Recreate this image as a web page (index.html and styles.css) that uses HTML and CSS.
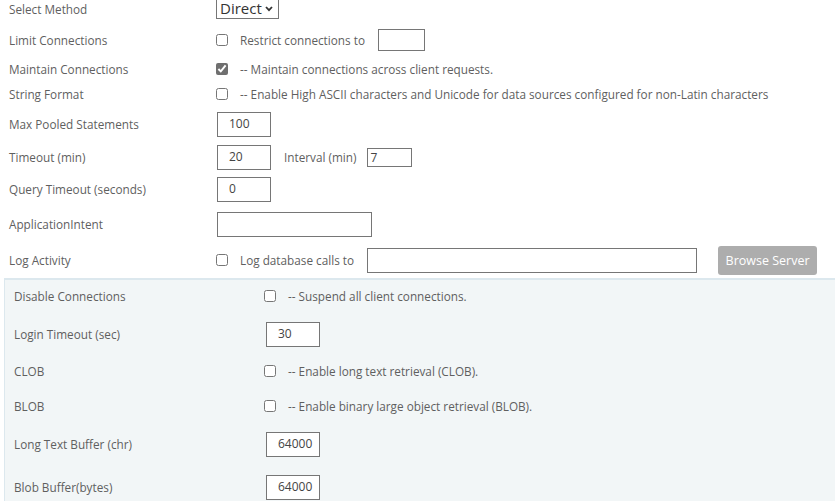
FILE: index.html
```html
<!DOCTYPE html>
<html>
<head>
<meta charset="utf-8">
<link rel="stylesheet" href="styles.css">
</head>
<body>
<div class="form">
  <div class="main">
    <div class="label first">Select Method</div>
    <div class="field field-sel">
      <span class="sel-wrap">
        <select class="method"><option>Direct</option></select>
        <svg class="chev" width="8" height="6" viewBox="0 0 8 6"><path d="M1 1 L4 4.2 L7 1" fill="none" stroke="#333" stroke-width="1.8"/></svg>
      </span>
    </div>

    <div class="label">Limit Connections</div>
    <div class="field"><input type="checkbox" class="cb"><span class="desc restrict">Restrict connections to</span><input class="txt w-restrict" type="text"></div>

    <div class="label">Maintain Connections</div>
    <div class="field"><input type="checkbox" class="cb" checked><span class="desc">-- Maintain connections across client requests.</span></div>

    <div class="label">String Format</div>
    <div class="field"><input type="checkbox" class="cb"><span class="desc">-- Enable High ASCII characters and Unicode for data sources configured for non-Latin characters</span></div>

    <div class="label">Max Pooled Statements</div>
    <div class="field"><input class="txt num" type="text" value="100"></div>

    <div class="label">Timeout (min)</div>
    <div class="field"><input class="txt num" type="text" value="20"><span class="desc interval">Interval (min)</span><input class="txt small" type="text" value="7"></div>

    <div class="label">Query Timeout (seconds)</div>
    <div class="field"><input class="txt num" type="text" value="0"></div>

    <div class="label">ApplicationIntent</div>
    <div class="field"><input class="txt wide" type="text"></div>

    <div class="label">Log Activity</div>
    <div class="field"><input type="checkbox" class="cb"><span class="desc logcalls">Log database calls to</span><input class="txt log" type="text"><button class="browse">Browse Server</button></div>
  </div>

  <div class="panel">
    <div class="label">Disable Connections</div>
    <div class="field"><input type="checkbox" class="cb"><span class="desc">-- Suspend all client connections.</span></div>

    <div class="label">Login Timeout (sec)</div>
    <div class="field"><input class="txt num" type="text" value="30"></div>

    <div class="label">CLOB</div>
    <div class="field"><input type="checkbox" class="cb"><span class="desc">-- Enable long text retrieval (CLOB).</span></div>

    <div class="label">BLOB</div>
    <div class="field"><input type="checkbox" class="cb"><span class="desc">-- Enable binary large object retrieval (BLOB).</span></div>

    <div class="label">Long Text Buffer (chr)</div>
    <div class="field"><input class="txt num" type="text" value="64000"></div>

    <div class="label">Blob Buffer(bytes)</div>
    <div class="field"><input class="txt num" type="text" value="64000"></div>
  </div>
</div>
</body>
</html>
```

FILE: styles.css
```css
html, body {
  margin: 0;
  padding: 0;
  background: #ffffff;
  overflow: hidden;
}
body {
  font-family: "Open Sans", "Segoe UI", Arial, sans-serif;
  font-size: 11.75px;
  color: #5f5f5f;
}
.main {
  display: grid;
  grid-template-columns: 207px 1fr;
  grid-template-rows: 28px 29px 25px 30px 33px 32px 35px 36px 30px;
  padding-left: 9px;
  align-items: start;
}
.label {
  height: 24px;
  display: flex;
  align-items: center;
  white-space: nowrap;
}
.label.first {
  height: 18px;
}
.field {
  height: 24px;
  display: flex;
  align-items: center;
  white-space: nowrap;
}
.field-sel {
  height: 18px;
  align-items: flex-start;
}
.sel-wrap {
  position: relative;
  display: inline-block;
  margin-top: -2px;
}
.method {
  -webkit-appearance: none;
  appearance: none;
  display: block;
  font-family: "Open Sans", "Segoe UI", Arial, sans-serif;
  font-size: 15px;
  color: #333;
  height: 21px;
  width: 63px;
  padding: 0 0 0 3px;
  margin: 0;
  border: 1px solid #767676;
  border-radius: 0;
  background: #fff;
  line-height: 19px;
}
.chev {
  position: absolute;
  left: 49px;
  top: 8px;
  pointer-events: none;
}
.cb {
  width: 12px;
  height: 12px;
  margin: 0 12px 0 0;
  accent-color: #6f6f6f;
}
.restrict { margin-right: 13px; }
.interval { margin-left: 13px; margin-right: 11px; }
.logcalls { margin-right: 13px; }
.txt {
  font-family: "Open Sans", "Segoe UI", Arial, sans-serif;
  font-size: 12px;
  color: #444;
  border: 1px solid #767676;
  border-radius: 0;
  margin: 0;
  box-sizing: border-box;
  background: #fff;
  outline: none;
}
.num {
  width: 54px;
  height: 25px;
  padding: 0 0 1px 11px;
  margin-left: 1px;
}
.small {
  width: 45px;
  height: 19px;
  padding: 0 2px;
}
.w-restrict {
  width: 47px;
  height: 22px;
}
.wide {
  width: 155px;
  height: 25px;
  margin-left: 1px;
}
.log {
  width: 330px;
  height: 25px;
}
.browse {
  margin-left: 21px;
  width: 99px;
  height: 29px;
  border: none;
  border-radius: 3px;
  background: #adadad;
  color: #ffffff;
  font-family: "Open Sans", "Segoe UI", Arial, sans-serif;
  font-size: 12.5px;
  padding: 0;
}
.panel {
  margin-left: 4px;
  background: #f2f6f7;
  border-top: 2px solid #dce8ee;
  border-left: 1px solid #dce8ee;
  display: grid;
  grid-template-columns: 250px 1fr;
  grid-template-rows: 38px 37px 35px 38px 43px 26px;
  padding: 4px 0 0 9px;
  align-items: start;
}
.panel .num {
  margin-left: 2px;
}
```
